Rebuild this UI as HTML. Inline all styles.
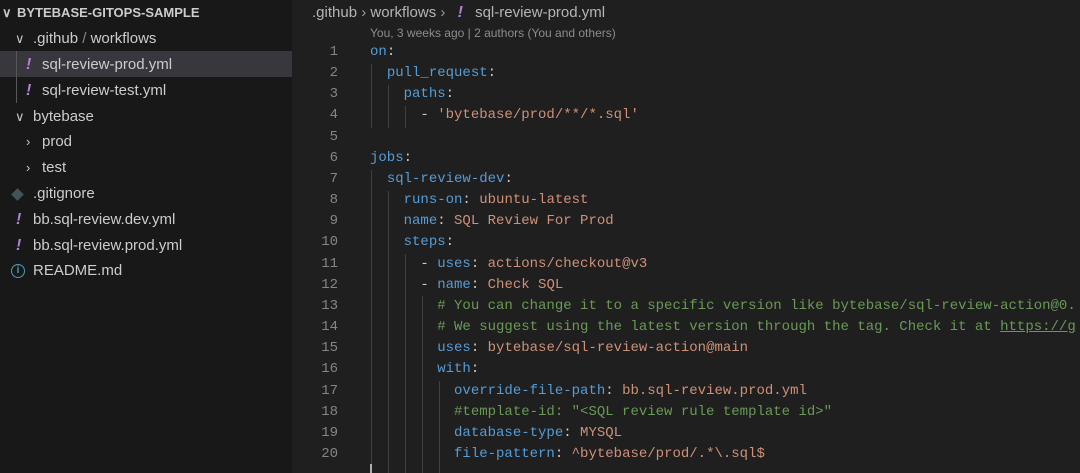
<!DOCTYPE html>
<html style="overflow:hidden;width:1080px;height:473px"><head><meta charset="utf-8"><style>
*{margin:0;padding:0;box-sizing:border-box}
body{width:1080px;height:473px;overflow:hidden;background:#1f1f1f;font-family:"Liberation Sans",sans-serif;position:relative}
#side{position:absolute;left:0;top:0;width:292px;height:473px;background:#181818;color:#cccccc;overflow:hidden}
.r{position:absolute;left:0;width:292px;height:26px;line-height:26px;font-size:15px;white-space:nowrap}
.r span{position:absolute}
.sel{background:#37373d}
.ex{color:#b180d7;font-style:italic;font-weight:bold;font-size:16px}
.ch{color:#c5c5c5;font-size:13px}
#ed{position:absolute;left:292px;top:0;width:788px;height:473px;background:#1f1f1f;overflow:hidden}
.bc{position:absolute;top:4px;left:20px;font-size:15px;color:#b5b5b5;white-space:nowrap}
.lens{position:absolute;top:26px;left:78px;font-size:12px;color:#8c8c8c}
.ln{position:absolute;left:0;width:46px;text-align:right;font-family:"Liberation Mono",monospace;font-size:14px;color:#858585;height:21px;line-height:21px}
.cl{position:absolute;left:78px;font-family:"Liberation Mono",monospace;font-size:14px;color:#cccccc;height:21px;line-height:21px;white-space:pre}
.k{color:#569cd6}.s{color:#ce9178}.c{color:#6a9955}
.g{position:absolute;width:1px;background:#404040}
</style></head><body>
<div id="side">
<div class="r" style="top:1px;height:24px;line-height:24px;font-size:13px;font-weight:bold"><span class="ch" style="left:2px">∨</span><span style="left:17px;color:#cccccc">BYTEBASE-GITOPS-SAMPLE</span></div>
<div class="r" style="top:26px"><span class="ch" style="left:15px">∨</span><span style="left:33px">.github<span style="position:static;color:#888"> / </span>workflows</span></div>
<div class="r sel" style="top:51px"><span style="left:16px;top:0;width:1px;height:52px;background:#585858"></span><span class="ex" style="left:26px;top:1px">!</span><span style="left:42px;top:1px">sql-review-prod.yml</span></div>
<div class="r" style="top:78px"><span class="ex" style="left:26px">!</span><span style="left:42px">sql-review-test.yml</span></div>
<div class="r" style="top:104px"><span class="ch" style="left:15px">∨</span><span style="left:33px">bytebase</span></div>
<div class="r" style="top:129px"><span class="ch" style="left:26px">›</span><span style="left:42px">prod</span></div>
<div class="r" style="top:155px"><span class="ch" style="left:26px">›</span><span style="left:42px">test</span></div>
<div class="r" style="top:181px"><span style="left:13px;top:9px;width:9px;height:9px;background:#41535b;transform:rotate(45deg)"></span><span style="left:33px">.gitignore</span></div>
<div class="r" style="top:207px"><span class="ex" style="left:16px">!</span><span style="left:33px">bb.sql-review.dev.yml</span></div>
<div class="r" style="top:233px"><span class="ex" style="left:16px">!</span><span style="left:33px">bb.sql-review.prod.yml</span></div>
<div class="r" style="top:258px"><span style="left:11px;top:6px;width:14px;height:14px;border:1.5px solid #519aba;border-radius:50%;color:#519aba;font-size:10px;line-height:11px;text-align:center;font-weight:bold">i</span><span style="left:33px">README.md</span></div>
</div>
<div id="ed">
<div class="bc">.github <span style="color:#999">›</span> workflows <span style="color:#999">›</span> <span class="ex" style="margin:0 8px">!</span> sql-review-prod.yml</div>
<div class="lens">You, 3 weeks ago | 2 authors (You and others)</div>
<div class="g" style="left:79px;top:64px;height:64px"></div>
<div class="g" style="left:96px;top:85px;height:43px"></div>
<div class="g" style="left:113px;top:106px;height:22px"></div>
<div class="g" style="left:79px;top:170px;height:303px"></div>
<div class="g" style="left:96px;top:191px;height:282px"></div>
<div class="g" style="left:113px;top:254px;height:219px"></div>
<div class="g" style="left:130px;top:296px;height:177px"></div>
<div class="g" style="left:147px;top:381px;height:92px"></div>
<div class="g" style="left:78px;top:464px;height:9px;width:2px;background:#aeafad"></div>
<div class="ln" style="top:42px">1</div><div class="cl" style="top:42px"><span class="k">on</span>:</div>
<div class="ln" style="top:63px">2</div><div class="cl" style="top:63px">  <span class="k">pull_request</span>:</div>
<div class="ln" style="top:84px">3</div><div class="cl" style="top:84px">    <span class="k">paths</span>:</div>
<div class="ln" style="top:105px">4</div><div class="cl" style="top:105px">      - <span class="s">'bytebase/prod/**/*.sql'</span></div>
<div class="ln" style="top:127px">5</div>
<div class="ln" style="top:148px">6</div><div class="cl" style="top:148px"><span class="k">jobs</span>:</div>
<div class="ln" style="top:169px">7</div><div class="cl" style="top:169px">  <span class="k">sql-review-dev</span>:</div>
<div class="ln" style="top:190px">8</div><div class="cl" style="top:190px">    <span class="k">runs-on</span>: <span class="s">ubuntu-latest</span></div>
<div class="ln" style="top:211px">9</div><div class="cl" style="top:211px">    <span class="k">name</span>: <span class="s">SQL Review For Prod</span></div>
<div class="ln" style="top:232px">10</div><div class="cl" style="top:232px">    <span class="k">steps</span>:</div>
<div class="ln" style="top:254px">11</div><div class="cl" style="top:254px">      - <span class="k">uses</span>: <span class="s">actions/checkout@v3</span></div>
<div class="ln" style="top:275px">12</div><div class="cl" style="top:275px">      - <span class="k">name</span>: <span class="s">Check SQL</span></div>
<div class="ln" style="top:296px">13</div><div class="cl" style="top:296px">        <span class="c"># You can change it to a specific version like bytebase/sql-review-action@0.</span></div>
<div class="ln" style="top:317px">14</div><div class="cl" style="top:317px">        <span class="c"># We suggest using the latest version through the tag. Check it at <u>https://g</u></span></div>
<div class="ln" style="top:338px">15</div><div class="cl" style="top:338px">        <span class="k">uses</span>: <span class="s">bytebase/sql-review-action@main</span></div>
<div class="ln" style="top:359px">16</div><div class="cl" style="top:359px">        <span class="k">with</span>:</div>
<div class="ln" style="top:381px">17</div><div class="cl" style="top:381px">          <span class="k">override-file-path</span>: <span class="s">bb.sql-review.prod.yml</span></div>
<div class="ln" style="top:402px">18</div><div class="cl" style="top:402px">          <span class="c">#template-id: "&lt;SQL review rule template id&gt;"</span></div>
<div class="ln" style="top:423px">19</div><div class="cl" style="top:423px">          <span class="k">database-type</span>: <span class="s">MYSQL</span></div>
<div class="ln" style="top:444px">20</div><div class="cl" style="top:444px">          <span class="k">file-pattern</span>: <span class="s">^bytebase/prod/.*\.sql$</span></div>
</div>
</body></html>
